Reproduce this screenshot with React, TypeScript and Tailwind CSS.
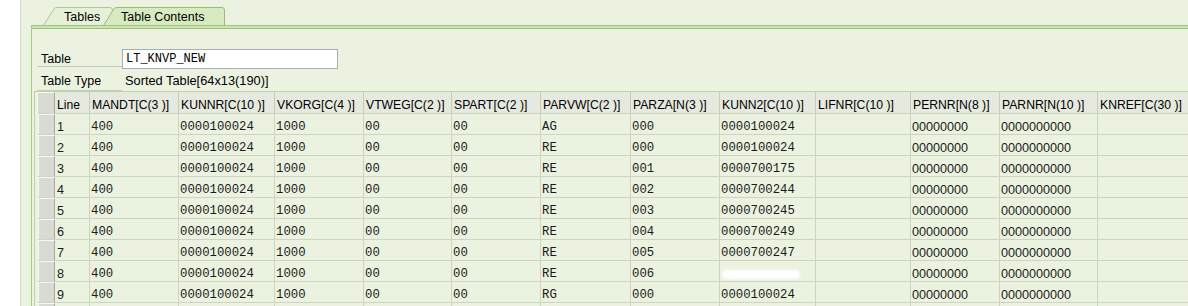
import React from "react";

const SANS = { fontFamily: '"Liberation Sans", Arial, sans-serif' };
const MONO = { fontFamily: '"Liberation Mono", "Courier New", monospace' };

type Col = { h: string; w: number; mono: boolean };

const COLS: Col[] = [
  { h: "Line", w: 34, mono: false },
  { h: "MANDT[C(3 )]", w: 89, mono: true },
  { h: "KUNNR[C(10 )]", w: 96, mono: true },
  { h: "VKORG[C(4 )]", w: 89, mono: true },
  { h: "VTWEG[C(2 )]", w: 88, mono: true },
  { h: "SPART[C(2 )]", w: 89, mono: true },
  { h: "PARVW[C(2 )]", w: 90, mono: true },
  { h: "PARZA[N(3 )]", w: 89, mono: true },
  { h: "KUNN2[C(10 )]", w: 96, mono: true },
  { h: "LIFNR[C(10 )]", w: 95, mono: true },
  { h: "PERNR[N(8 )]", w: 89, mono: false },
  { h: "PARNR[N(10 )]", w: 98, mono: false },
  { h: "KNREF[C(30 )]", w: 220, mono: true },
];

const ROWS: string[][] = [
  ["1", "400", "0000100024", "1000", "00", "00", "AG", "000", "0000100024", "", "00000000", "0000000000", ""],
  ["2", "400", "0000100024", "1000", "00", "00", "RE", "000", "0000100024", "", "00000000", "0000000000", ""],
  ["3", "400", "0000100024", "1000", "00", "00", "RE", "001", "0000700175", "", "00000000", "0000000000", ""],
  ["4", "400", "0000100024", "1000", "00", "00", "RE", "002", "0000700244", "", "00000000", "0000000000", ""],
  ["5", "400", "0000100024", "1000", "00", "00", "RE", "003", "0000700245", "", "00000000", "0000000000", ""],
  ["6", "400", "0000100024", "1000", "00", "00", "RE", "004", "0000700249", "", "00000000", "0000000000", ""],
  ["7", "400", "0000100024", "1000", "00", "00", "RE", "005", "0000700247", "", "00000000", "0000000000", ""],
  ["8", "400", "0000100024", "1000", "00", "00", "RE", "006", "#REDACT", "", "00000000", "0000000000", ""],
  ["9", "400", "0000100024", "1000", "00", "00", "RG", "000", "0000100024", "", "00000000", "0000000000", ""],
  ["", "", "", "", "", "", "", "", "", "", "", "", ""],
];

function Selector({ header }: { header?: boolean }) {
  return (
    <div
      className={`shrink-0 ${header ? "w-[18px] -ml-px" : "w-[17px]"} bg-[#d9dad3] border-t border-l border-t-[#f7f7f3] border-l-[#f7f7f3] border-r border-r-[#a6a89f]`}
    />
  );
}

function Tab({ label, w, active }: { label: string; w: number; active?: boolean }) {
  return (
    <div className="relative h-[18px] shrink-0" style={{ width: w }}>
      <svg className="absolute inset-0" width={w} height={18} viewBox={`0 0 ${w} 18`}>
        <path
          d={`M0.5,18.5 L11,1.6 Q12,0.5 14,0.5 L${w - 3},0.5 Q${w - 0.5},0.5 ${w - 0.5},3 L${w - 0.5},18.5`}
          fill={active ? "#d7eac0" : "#e6f0d9"}
          stroke={active ? "#95c076" : "#adca95"}
          strokeWidth={1}
        />
      </svg>
      <div
        className={`relative text-[12.5px] leading-[18px] text-black pt-[1px] ${active ? "pl-[18px]" : "pl-[21px]"}`}
        style={SANS}
      >
        {label}
      </div>
    </div>
  );
}

export default function App() {
  return (
    <div className="flex w-[1188px] h-[306px] overflow-hidden bg-white">
      <div className="w-[20px] shrink-0 bg-white" />
      <div className="w-px shrink-0 bg-[#d3dcc9]" />
      <div className="flex-1 min-w-0 flex flex-col bg-[#ebf3e0]">
        {/* tab strip */}
        <div className="h-[25px] shrink-0 flex items-end pl-[22px]">
          <Tab label="Tables" w={70} />
          <div className="-ml-[10px]">
            <Tab label="Table Contents" w={122} active />
          </div>
        </div>
        {/* panel */}
        <div className="ml-[10px] flex-1 flex flex-col border-l border-[#a6c98c] min-w-0">
          <div className="h-[4px] shrink-0 border-t border-b border-[#9cc47e] bg-[#cce3b5]" />
          {/* form */}
          <div className="pl-[5px] pt-[20px] flex flex-col">
            <div className="flex items-start h-[20px]">
              <div
                className="w-[85px] h-[18px] flex items-end pl-[4px] border-b border-[#c3c9bb] text-[12.5px] leading-[14px] text-black"
                style={SANS}
              >
                Table
              </div>
              <div
                className="w-[216px] h-[20px] border border-[#a7aeb6] bg-white pl-[3px] flex items-center text-[12px] text-black"
                style={MONO}
              >
                LT_KNVP_NEW
              </div>
            </div>
            <div className="flex items-end h-[22px]">
              <div
                className="w-[85px] h-[22px] flex items-end pl-[4px] pb-[2px] border-b border-[#c3c9bb] text-[12.5px] leading-[14px] text-black"
                style={SANS}
              >
                Table Type
              </div>
              <div className="pl-[3px] pb-[3px] text-[12.8px] leading-[14px] text-black" style={SANS}>
                Sorted Table[64x13(190)]
              </div>
            </div>
          </div>
          {/* table */}
          <div className="ml-[2px] pl-[3px] border-l border-t border-[#b9d6a3] flex flex-col">
            <div className="flex h-[22px] border-b border-[#cbd4c0]">
              <Selector header />
              {COLS.map((c) => (
                <div
                  key={c.h}
                  className={`shrink-0 h-full bg-[#e5e9de] flex items-end pl-[2px] pb-[1px] text-[12.2px] leading-[14px] text-black whitespace-nowrap overflow-hidden ${c.h === "Line" ? "" : "border-l border-[#c6cbbd]"}`}
                  style={{ ...SANS, width: c.w }}
                >
                  {c.h}
                </div>
              ))}
            </div>
            {ROWS.map((r, i) => (
              <div key={i} className="flex h-[21px] border-b border-[#cbd5bf]">
                <Selector />
                {COLS.map((c, j) => {
                  const v = r[j];
                  return (
                    <div
                      key={j}
                      className={`shrink-0 h-full flex items-end pl-[1px] whitespace-nowrap overflow-hidden text-[#1c1a1a] ${j === 0 ? "pl-[2px]" : "border-l border-[#cbd5bf]"} ${c.mono ? "text-[12.3px] leading-[14px]" : "text-[12.6px] leading-[14px]"}`}
                      style={{ ...(c.mono ? MONO : SANS), width: c.w }}
                    >
                      {v === "#REDACT" ? (
                        <div className="mb-[2px] ml-[1px] w-[78px] h-[9px] bg-white rounded-full blur-[1px]" />
                      ) : (
                        v
                      )}
                    </div>
                  );
                })}
              </div>
            ))}
          </div>
        </div>
      </div>
    </div>
  );
}
